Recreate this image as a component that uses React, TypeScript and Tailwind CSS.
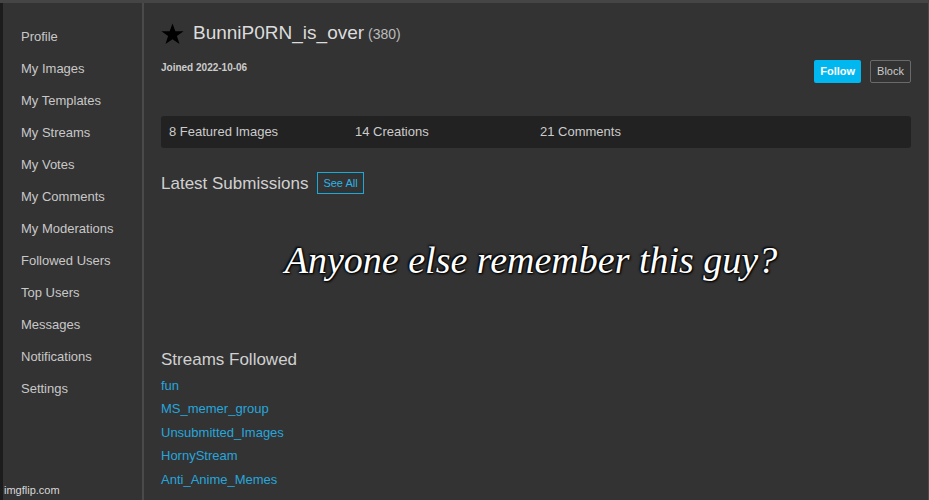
import React from "react";

const menuItems = [
  "Profile",
  "My Images",
  "My Templates",
  "My Streams",
  "My Votes",
  "My Comments",
  "My Moderations",
  "Followed Users",
  "Top Users",
  "Messages",
  "Notifications",
  "Settings",
];

const streams = [
  "fun",
  "MS_memer_group",
  "Unsubmitted_Images",
  "HornyStream",
  "Anti_Anime_Memes",
];

const Sidebar: React.FC = () => (
  <div className="w-[139px] shrink-0 pt-[25px] pl-[18px] bg-[#333333]">
    {menuItems.map((item) => (
      <div key={item} className="h-8 text-[13px] leading-[18px] text-[#c8c8c8]">
        {item}
      </div>
    ))}
  </div>
);

const App: React.FC = () => {
  return (
    <div
      className="relative w-[929px] h-[500px] overflow-hidden bg-[#333333] flex flex-col"
      style={{ fontFamily: '"Liberation Sans", Arial, sans-serif' }}
    >
      <div className="h-[3px] bg-[#454545] shrink-0"></div>
      <div className="flex flex-1">
        <div className="w-[3px] bg-[#1c1c1c] shrink-0"></div>
        <Sidebar />
        <div className="w-[2px] bg-[#4a4a4a] shrink-0"></div>

        {/* Main content */}
        <div className="flex-1 pl-[17px] pr-[17px] pt-[16px]">
          <div className="flex items-center">
            <svg width="23" height="23" viewBox="0 0 24 24" className="mr-[9px]">
              <path
                d="M12 1.5l3 8.1h8.6l-7 5.1 2.7 8.3L12 17.9 4.7 23l2.7-8.3-7-5.1H9z"
                fill="#000"
              />
            </svg>
            <span className="text-[19px] text-[#dcdcdc]">BunniP0RN_is_over</span>
            <span className="ml-[4px] text-[14px] text-[#bbbbbb] mt-[2px]">(380)</span>
          </div>

          <div className="flex items-start justify-between mt-[12px]">
            <div className="text-[10px] font-bold text-[#cccccc]">Joined 2022-10-06</div>
            <div className="flex gap-[9px] mt-[0px]">
              <button className="h-[23px] px-[6px] bg-[#00b7ef] text-white text-[11px] font-bold rounded-[2px]">
                Follow
              </button>
              <button className="h-[23px] px-[6px] border border-[#6a6a6a] text-[#cccccc] text-[11px] rounded-[2px]">
                Block
              </button>
            </div>
          </div>

          <div className="mt-[33px] h-[32px] bg-[#222222] rounded-[3px] flex items-center pl-[8px] text-[13px] text-[#cccccc]">
            <span className="w-[186px]">8 Featured Images</span>
            <span className="w-[185px]">14 Creations</span>
            <span>21 Comments</span>
          </div>

          <div className="mt-[23px] flex items-center">
            <span className="text-[17px] text-[#d0d0d0]">Latest Submissions</span>
            <span className="ml-[9px] h-[22px] px-[5px] border border-[#1aa9d8] text-[#2db3e6] text-[11px] flex items-center">
              See All
            </span>
          </div>

          <div className="mt-[151px] text-[17px] text-[#d0d0d0]">Streams Followed</div>
          <div className="mt-[3px] flex flex-col">
            {streams.map((s) => (
              <div key={s} className="h-[23.5px] text-[13px] text-[#27a6dc]">
                {s}
              </div>
            ))}
          </div>
        </div>
        <div className="w-[1px] bg-[#4a4a4a] shrink-0"></div>
      </div>

      {/* Meme caption */}
      <div
        className="absolute left-[280px] top-[232px] w-[502px] text-center text-[38px] italic text-white whitespace-nowrap"
        style={{
          fontFamily: '"Liberation Serif", serif',
          textShadow: "0 0 3px #000, 1px 1px 2px #000, -1px -1px 2px #000",
        }}
      >
        Anyone else remember this guy?
      </div>

      <div className="absolute left-[4px] bottom-[2px] text-[11px] text-[#d8d8d8]">imgflip.com</div>
    </div>
  );
};

export default App;
